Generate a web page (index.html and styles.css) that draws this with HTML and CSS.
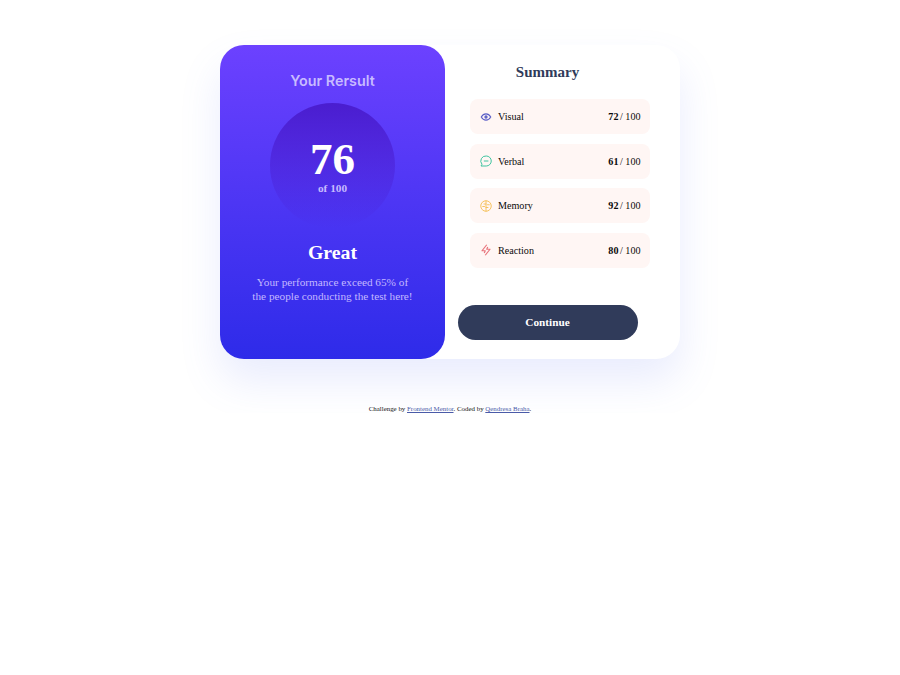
FILE: index.html
```html
<!DOCTYPE html>
<html lang="en">
<head>
<meta charset="utf-8">
<title>Results summary</title>
<link rel="stylesheet" href="styles.css">
</head>
<body>
<main class="card">
  <section class="result">
    <h2 class="result-title">Your Rersult</h2>
    <div class="score">
      <span class="score-value">76</span>
      <span class="score-total">of 100</span>
    </div>
    <h1 class="grade">Great</h1>
    <p class="message">Your performance exceed 65% of<br>the people conducting the test here!</p>
  </section>
  <section class="summary">
    <h2 class="summary-title">Summary</h2>
    <ul class="items">
      <li class="item">
        <svg class="icon" viewBox="0 0 24 24" fill="none" stroke="#5b5fc7" stroke-width="2.200"><path d="M2.500 12c2.300-4 5.500-6.300 9.500-6.300s7.200 2.300 9.500 6.300c-2.300 4-5.500 6.300-9.500 6.300S4.800 16 2.500 12z"/><circle cx="12" cy="12" r="2.200" fill="#5b5fc7"/></svg>
        <span class="item-name">Visual</span>
        <span class="item-score"><b class="item-value">72</b> / 100</span>
      </li>
      <li class="item">
        <svg class="icon" viewBox="0 0 24 24" fill="none" stroke="#3fc4a0" stroke-width="2"><path d="M12.500 2a10 10 0 1 1 0 20H2l2-3.500A10 10 0 0 1 12.500 2z"/><path d="M8.500 12h7.500" stroke-linecap="round"/></svg>
        <span class="item-name">Verbal</span>
        <span class="item-score"><b class="item-value">61</b> / 100</span>
      </li>
      <li class="item">
        <svg class="icon" viewBox="0 0 24 24" fill="none" stroke="#f5bd50" stroke-width="1.800"><circle cx="12" cy="12" r="10.500"/><path d="M12 2v20M12 8H8M12 15h4M5.500 13H9M15 9.500h3.500" stroke-linecap="round"/></svg>
        <span class="item-name">Memory</span>
        <span class="item-score"><b class="item-value">92</b> / 100</span>
      </li>
      <li class="item">
        <svg class="icon" viewBox="0 0 24 24" fill="none" stroke="#e8747c" stroke-width="2.400" stroke-linejoin="round"><path d="M13.500 1.500 4 13.500h6.500L8.500 18M10.500 22.500 20 10.500h-6.500L15.500 6"/></svg>
        <span class="item-name">Reaction</span>
        <span class="item-score"><b class="item-value">80</b> / 100</span>
      </li>
    </ul>
    <button class="continue" type="button">Continue</button>
  </section>
</main>
<footer class="attribution">Challenge by <a href="#">Frontend Mentor</a>. Coded by <a href="#">Qendresa Braha</a>.</footer>
</body>
</html>
```

FILE: styles.css
```css
* { box-sizing: border-box; }
html, body { margin: 0; padding: 0; }
body {
  background: #fff;
  font-family: "Liberation Serif", "Times New Roman", serif;
  color: #000;
  padding-top: 45px;
}
h1, h2, p, ul { margin: 0; padding: 0; }
.card {
  width: 460px;
  height: 314px;
  margin: 0 auto;
  display: flex;
  background: #fff;
  border-radius: 24px;
  box-shadow: 0 22px 40px rgba(110, 130, 240, 0.15);
}
.result {
  width: 225px;
  flex: none;
  border-radius: 24px;
  background: linear-gradient(180deg, #6c41ff 0%, #2e2be9 100%);
  display: flex;
  flex-direction: column;
  align-items: center;
  padding-top: 27px;
}
.result-title {
  font-family: "Inter", "Noto Sans", sans-serif;
  font-size: 14.300px;
  line-height: 18px;
  font-weight: 600;
  color: #c8bbff;
}
.score {
  width: 125px;
  height: 125px;
  margin-top: 13px;
  border-radius: 50%;
  background: linear-gradient(180deg, #4a1dcf 0%, rgba(70, 40, 225, 0) 100%);
  display: flex;
  flex-direction: column;
  align-items: center;
  padding-top: 35px;
  color: #fff;
}
.score-value { font-size: 45px; line-height: 42px; font-weight: 700; }
.score-total { margin-top: 1px; font-size: 11.250px; line-height: 14px; font-weight: 700; color: #c8bbff; }
.grade {
  margin-top: 12px;
  font-size: 19.800px;
  line-height: 24px;
  font-weight: 700;
  color: #fff;
}
.message {
  margin-top: 12px;
  font-size: 11.250px;
  line-height: 13.500px;
  text-align: center;
  color: #c3b8ff;
}
.summary {
  flex: 1;
  display: flex;
  flex-direction: column;
  padding: 17px 0 0 12.500px;
}
.summary-title {
  width: 180px;
  font-size: 15px;
  line-height: 20px;
  font-weight: 700;
  text-align: center;
  color: #303b5a;
}
.items {
  list-style: none;
  margin: 17px 0 0 12.500px;
  display: flex;
  flex-direction: column;
  gap: 9.500px;
  width: 180px;
}
.item {
  height: 35px;
  display: flex;
  align-items: center;
  padding: 0 9.500px 0 10px;
  border-radius: 8px;
  background: #fff6f4;
  font-size: 10.125px;
  color: #0a0a0a;
}
.icon { width: 12px; height: 12px; flex: none; margin-right: 6px; }
.item-name { flex: 1; }
.item-value { margin-right: -1px; }
.continue {
  display: block;
  width: 180px;
  height: 35px;
  margin-top: 37px;
  border: 0;
  border-radius: 18px;
  background: #303b5a;
  color: #fff;
  font-family: inherit;
  font-size: 11.250px;
  font-weight: 700;
}
.attribution {
  margin-top: 45px;
  text-align: center;
  font-size: 6.900px;
  line-height: 9px;
  color: #111;
}
.attribution a { color: #4a5ba8; }
```
